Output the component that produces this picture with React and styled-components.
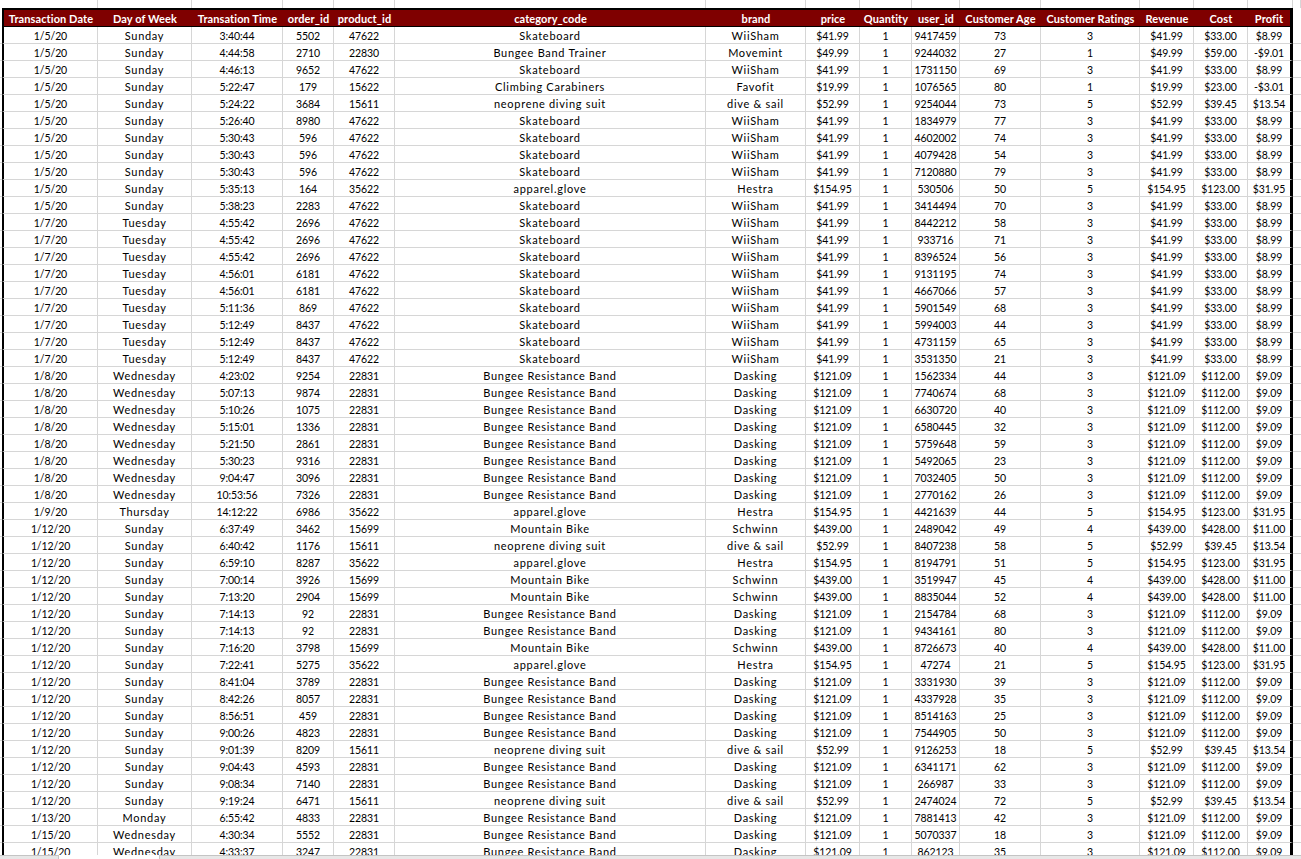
import React from "react";
import styled, { createGlobalStyle } from "styled-components";

const GlobalStyle = createGlobalStyle`
  html, body {
    margin: 0;
    height: 100%;
    overflow: hidden;
    background: #ffffff;
  }
`;

// first and last entries are the narrow sheet columns outside the bordered block
const widths = [2, 96, 94, 91, 51, 61, 311, 100, 54, 52, 48, 81, 99, 54, 54, 45, 8];

const headers = [
  "Transaction Date",
  "Day of Week",
  "Transation Time",
  "order_id",
  "product_id",
  "category_code",
  "brand",
  "price",
  "Quantity",
  "user_id",
  "Customer Age",
  "Customer Ratings",
  "Revenue",
  "Cost",
  "Profit",
];

// day, category and brand hold words, the rest are figures
const wordColumns = [1, 5, 6];

const products = {
  skate: { id: 47622, name: "Skateboard", brand: "WiiSham", price: "$41.99", rating: 3, cost: "$33.00", profit: "$8.99" },
  trainer: { id: 22830, name: "Bungee Band Trainer", brand: "Movemint", price: "$49.99", rating: 1, cost: "$59.00", profit: "-$9.01" },
  carab: { id: 15622, name: "Climbing Carabiners", brand: "Favofit", price: "$19.99", rating: 1, cost: "$23.00", profit: "-$3.01" },
  suit: { id: 15611, name: "neoprene diving suit", brand: "dive & sail", price: "$52.99", rating: 5, cost: "$39.45", profit: "$13.54" },
  glove: { id: 35622, name: "apparel.glove", brand: "Hestra", price: "$154.95", rating: 5, cost: "$123.00", profit: "$31.95" },
  band: { id: 22831, name: "Bungee Resistance Band", brand: "Dasking", price: "$121.09", rating: 3, cost: "$112.00", profit: "$9.09" },
  bike: { id: 15699, name: "Mountain Bike", brand: "Schwinn", price: "$439.00", rating: 4, cost: "$428.00", profit: "$11.00" },
};

const orders = [
  ["1/5/20", "Sunday", "3:40:44", 5502, "skate", 9417459, 73],
  ["1/5/20", "Sunday", "4:44:58", 2710, "trainer", 9244032, 27],
  ["1/5/20", "Sunday", "4:46:13", 9652, "skate", 1731150, 69],
  ["1/5/20", "Sunday", "5:22:47", 179, "carab", 1076565, 80],
  ["1/5/20", "Sunday", "5:24:22", 3684, "suit", 9254044, 73],
  ["1/5/20", "Sunday", "5:26:40", 8980, "skate", 1834979, 77],
  ["1/5/20", "Sunday", "5:30:43", 596, "skate", 4602002, 74],
  ["1/5/20", "Sunday", "5:30:43", 596, "skate", 4079428, 54],
  ["1/5/20", "Sunday", "5:30:43", 596, "skate", 7120880, 79],
  ["1/5/20", "Sunday", "5:35:13", 164, "glove", 530506, 50],
  ["1/5/20", "Sunday", "5:38:23", 2283, "skate", 3414494, 70],
  ["1/7/20", "Tuesday", "4:55:42", 2696, "skate", 8442212, 58],
  ["1/7/20", "Tuesday", "4:55:42", 2696, "skate", 933716, 71],
  ["1/7/20", "Tuesday", "4:55:42", 2696, "skate", 8396524, 56],
  ["1/7/20", "Tuesday", "4:56:01", 6181, "skate", 9131195, 74],
  ["1/7/20", "Tuesday", "4:56:01", 6181, "skate", 4667066, 57],
  ["1/7/20", "Tuesday", "5:11:36", 869, "skate", 5901549, 68],
  ["1/7/20", "Tuesday", "5:12:49", 8437, "skate", 5994003, 44],
  ["1/7/20", "Tuesday", "5:12:49", 8437, "skate", 4731159, 65],
  ["1/7/20", "Tuesday", "5:12:49", 8437, "skate", 3531350, 21],
  ["1/8/20", "Wednesday", "4:23:02", 9254, "band", 1562334, 44],
  ["1/8/20", "Wednesday", "5:07:13", 9874, "band", 7740674, 68],
  ["1/8/20", "Wednesday", "5:10:26", 1075, "band", 6630720, 40],
  ["1/8/20", "Wednesday", "5:15:01", 1336, "band", 6580445, 32],
  ["1/8/20", "Wednesday", "5:21:50", 2861, "band", 5759648, 59],
  ["1/8/20", "Wednesday", "5:30:23", 9316, "band", 5492065, 23],
  ["1/8/20", "Wednesday", "9:04:47", 3096, "band", 7032405, 50],
  ["1/8/20", "Wednesday", "10:53:56", 7326, "band", 2770162, 26],
  ["1/9/20", "Thursday", "14:12:22", 6986, "glove", 4421639, 44],
  ["1/12/20", "Sunday", "6:37:49", 3462, "bike", 2489042, 49],
  ["1/12/20", "Sunday", "6:40:42", 1176, "suit", 8407238, 58],
  ["1/12/20", "Sunday", "6:59:10", 8287, "glove", 8194791, 51],
  ["1/12/20", "Sunday", "7:00:14", 3926, "bike", 3519947, 45],
  ["1/12/20", "Sunday", "7:13:20", 2904, "bike", 8835044, 52],
  ["1/12/20", "Sunday", "7:14:13", 92, "band", 2154784, 68],
  ["1/12/20", "Sunday", "7:14:13", 92, "band", 9434161, 80],
  ["1/12/20", "Sunday", "7:16:20", 3798, "bike", 8726673, 40],
  ["1/12/20", "Sunday", "7:22:41", 5275, "glove", 47274, 21],
  ["1/12/20", "Sunday", "8:41:04", 3789, "band", 3331930, 39],
  ["1/12/20", "Sunday", "8:42:26", 8057, "band", 4337928, 35],
  ["1/12/20", "Sunday", "8:56:51", 459, "band", 8514163, 25],
  ["1/12/20", "Sunday", "9:00:26", 4823, "band", 7544905, 50],
  ["1/12/20", "Sunday", "9:01:39", 8209, "suit", 9126253, 18],
  ["1/12/20", "Sunday", "9:04:43", 4593, "band", 6341171, 62],
  ["1/12/20", "Sunday", "9:08:34", 7140, "band", 266987, 33],
  ["1/12/20", "Sunday", "9:19:24", 6471, "suit", 2474024, 72],
  ["1/13/20", "Monday", "6:55:42", 4833, "band", 7881413, 42],
  ["1/15/20", "Wednesday", "4:30:34", 5552, "band", 5070337, 18],
  ["1/15/20", "Wednesday", "4:33:37", 3247, "band", 862123, 35],
];

const Page = styled.div`
  height: 859px;
  display: flex;
  flex-direction: column;
  overflow: hidden;
`;

const SheetView = styled.div`
  flex: 1;
  min-height: 0;
  overflow: hidden;
`;

const Sheet = styled.table`
  width: 1301px;
  table-layout: fixed;
  border-collapse: separate;
  border-spacing: 0;
  font-family: "Lato", "Liberation Sans", sans-serif;
  color: #000000;
`;

const SpacerRow = styled.tr`
  height: 8px;
`;

const HeaderRow = styled.tr`
  height: 19px;
`;

const DataRow = styled.tr`
  height: 17px;
`;

const Blank = styled.td`
  padding: 0;
  box-sizing: border-box;
  border-right: ${(p) => (p.$open ? "0" : "1px solid #d6d6d6")};
  border-bottom: ${(p) => (p.$ruled ? "1px solid #d6d6d6" : "0")};
`;

const HeaderCell = styled.th`
  padding: 0;
  box-sizing: border-box;
  background: #7f0000;
  color: #ffffff;
  font-weight: 700;
  font-size: 11px;
  letter-spacing: 0.1px;
  text-align: center;
  white-space: nowrap;
  overflow: hidden;
  border-top: 2px solid #000000;
  border-bottom: 1px solid #000000;
  border-left: ${(p) => (p.$first ? "2px solid #000000" : "0")};
  border-right: ${(p) => (p.$last ? "3px solid #000000" : "0")};
`;

const Cell = styled.td`
  padding: 1px 0 0;
  box-sizing: border-box;
  height: 17px;
  font-size: ${(p) => (p.$figure ? "10.5px" : "11px")};
  letter-spacing: ${(p) => (p.$figure ? "-0.1px" : "0.7px")};
  text-align: center;
  white-space: nowrap;
  overflow: hidden;
  line-height: 14px;
  border-bottom: 1px solid #d6d6d6;
  border-left: ${(p) => (p.$first ? "2px solid #000000" : "0")};
  border-right: ${(p) => (p.$last ? "3px solid #000000" : "1px solid #d6d6d6")};
`;

const ScrollTrack = styled.div`
  flex: none;
  height: 4px;
  display: flex;
  background: #e7e7e7;
  border-top: 1px solid #c4c4c4;
  box-sizing: border-box;
`;

const TabGutter = styled.div`
  width: 58px;
`;

const ActiveTab = styled.div`
  width: 102px;
  margin-top: -1px;
  background: #ffffff;
  border-left: 1px solid #c4c4c4;
  border-right: 1px solid #c4c4c4;
  box-sizing: border-box;
`;

const rowValues = ([date, day, time, order, key, user, age]) => {
  const p = products[key];
  return [date, day, time, order, p.id, p.name, p.brand, p.price, 1, user, age, p.rating, p.price, p.cost, p.profit];
};

export default function App() {
  return (
    <Page>
      <GlobalStyle />
      <SheetView>
        <Sheet>
          <colgroup>
            {widths.map((w, i) => (
              <col key={i} style={{ width: w }} />
            ))}
          </colgroup>
          <tbody>
            <SpacerRow>
              {widths.map((w, i) => (
                <Blank key={i} $open={i === 0} />
              ))}
            </SpacerRow>
            <HeaderRow>
              <Blank $open />
              {headers.map((h, i) => (
                <HeaderCell key={h} $first={i === 0} $last={i === headers.length - 1}>
                  {h}
                </HeaderCell>
              ))}
              <Blank $open />
            </HeaderRow>
            {orders.map((o, r) => (
              <DataRow key={r}>
                <Blank $open $ruled />
                {rowValues(o).map((v, i) => (
                  <Cell
                    key={i}
                    $figure={!wordColumns.includes(i)}
                    $first={i === 0}
                    $last={i === headers.length - 1}
                  >
                    {v}
                  </Cell>
                ))}
                <Blank $open $ruled />
              </DataRow>
            ))}
          </tbody>
        </Sheet>
      </SheetView>
      <ScrollTrack>
        <TabGutter />
        <ActiveTab />
      </ScrollTrack>
    </Page>
  );
}
